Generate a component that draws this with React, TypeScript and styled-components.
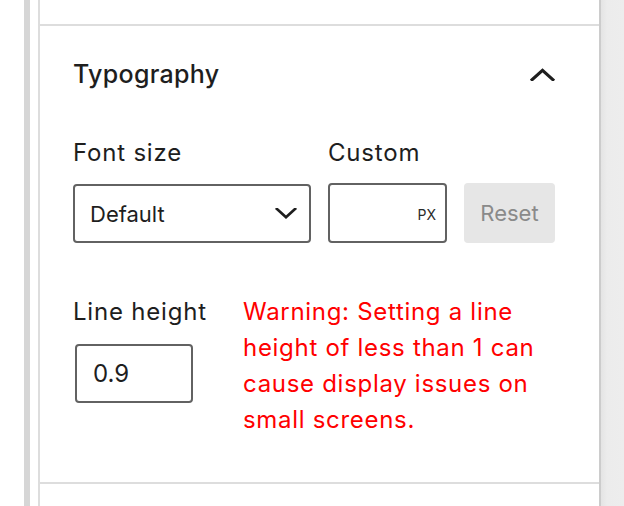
import React from "react";
import styled, { createGlobalStyle } from "styled-components";

const GlobalStyle = createGlobalStyle`
  html, body {
    margin: 0;
    padding: 0;
    background: #ffffff;
  }
  body {
    font-family: Inter, "Noto Sans", "Liberation Sans", sans-serif;
    color: #1e1e1e;
  }
  * { box-sizing: border-box; }
`;

const Page = styled.div`
  display: flex;
  height: 506px;
  overflow: hidden;
`;

const Gutter = styled.div<{ $w: number }>`
  width: ${(p) => p.$w}px;
  flex-shrink: 0;
  background: #ffffff;
`;

const Rail = styled.div`
  width: 6px;
  flex-shrink: 0;
  background: #d6d6d6;
`;

const Panel = styled.div`
  width: 563px;
  flex-shrink: 0;
  border-left: 2px solid #dddddd;
  border-right: 2px solid #cccccc;
  display: flex;
  flex-direction: column;
  background: #ffffff;
`;

const Backdrop = styled.div`
  flex: 1;
  background: linear-gradient(90deg, #e4e4e4 0px, #ececec 6px, #ededed 100%);
`;

const Stub = styled.div<{ $h?: number }>`
  height: ${(p) => (p.$h ? `${p.$h}px` : "auto")};
  flex: ${(p) => (p.$h ? "0 0 auto" : "1")};
`;

const Section = styled.section`
  border-top: 2px solid #dddddd;
  border-bottom: 2px solid #dddddd;
  height: 460px;
  padding: 0 44px 0 33px;
  display: flex;
  flex-direction: column;
`;

const Header = styled.div`
  height: 96px;
  display: flex;
  align-items: center;
  justify-content: space-between;
`;

const Title = styled.h2`
  margin: 0;
  font-size: 25px;
  line-height: 32px;
  font-weight: 500;
  letter-spacing: 0.3px;
  color: #1e1e1e;
`;

const Row = styled.div<{ $top: number; $align?: string }>`
  display: flex;
  margin-top: ${(p) => p.$top}px;
  gap: 17px;
  align-items: ${(p) => p.$align || "flex-end"};
`;

const Field = styled.div<{ $gap: number; $width?: number }>`
  display: flex;
  flex-direction: column;
  gap: ${(p) => p.$gap}px;
  ${(p) => (p.$width ? `width: ${p.$width}px; flex-shrink: 0;` : "")}
`;

const Label = styled.div<{ $lh?: number }>`
  font-size: 24px;
  line-height: ${(p) => p.$lh || 30}px;
  letter-spacing: 0.8px;
  color: #1e1e1e;
  white-space: nowrap;
`;

const SelectBox = styled.div`
  width: 238px;
  height: 59px;
  border: 2px solid #626262;
  border-radius: 4px;
  padding: 0 12px 0 15px;
  display: flex;
  align-items: center;
  justify-content: space-between;
  font-size: 22px;
  color: #1e1e1e;
`;

const InputBox = styled.div<{ $w: number; $h: number; $justify?: string }>`
  width: ${(p) => p.$w}px;
  height: ${(p) => p.$h}px;
  border: 2px solid #626262;
  border-radius: 4px;
  display: flex;
  align-items: center;
  justify-content: ${(p) => p.$justify || "flex-start"};
  padding: 0 9px 0 16px;
  font-size: 24px;
  color: #1e1e1e;
`;

const Unit = styled.span`
  font-size: 14px;
  color: #2a2a2a;
  margin-top: 3px;
`;

const ResetButton = styled.button`
  width: 92px;
  height: 60px;
  border: none;
  border-radius: 4px;
  background: #e6e6e6;
  color: #8a8a8a;
  font-family: inherit;
  font-size: 22px;
  padding: 0;
`;

const Warning = styled.p`
  margin: 0;
  width: 312px;
  color: #ff0000;
  font-size: 24px;
  letter-spacing: 0.7px;
  line-height: 36px;
`;

const LineInput = styled(InputBox)`
  margin-left: 2px;
`;

const Chevron = ({ up, w, h }: { up?: boolean; w: number; h: number }) => (
  <svg width={w} height={h} viewBox="0 0 24 12" fill="none">
    <path
      d={up ? "M2 11 L12 2 L22 11" : "M2 1 L12 10 L22 1"}
      stroke="#1e1e1e"
      strokeWidth={3}
      strokeLinecap="square"
    />
  </svg>
);

export default function App() {
  return (
    <>
      <GlobalStyle />
      <Page>
        <Gutter $w={24} />
        <Rail />
        <Gutter $w={8} />
        <Panel>
          <Stub $h={24} />
          <Section>
            <Header>
              <Title>Typography</Title>
              <Chevron up w={25} h={13} />
            </Header>
            <Row $top={16}>
              <Field $gap={16}>
                <Label>Font size</Label>
                <SelectBox>
                  <span>Default</span>
                  <Chevron w={22} h={11} />
                </SelectBox>
              </Field>
              <Field $gap={15}>
                <Label>Custom</Label>
                <InputBox $w={119} $h={60} $justify="flex-end">
                  <Unit>PX</Unit>
                </InputBox>
              </Field>
              <ResetButton>Reset</ResetButton>
            </Row>
            <Row $top={51} $align="flex-start">
              <Field $gap={14} $width={153}>
                <Label $lh={36}>Line height</Label>
                <LineInput $w={118} $h={59}>0.9</LineInput>
              </Field>
              <Warning>
                Warning: Setting a line height of less than 1 can cause display issues on small screens.
              </Warning>
            </Row>
          </Section>
          <Stub />
        </Panel>
        <Backdrop />
      </Page>
    </>
  );
}
